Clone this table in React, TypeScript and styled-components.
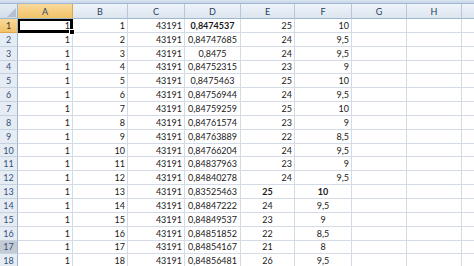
import React from "react";
import styled, { createGlobalStyle, css } from "styled-components";

type Align = "left" | "center" | "right";

const GlobalStyle = createGlobalStyle`
	html, body {
		margin: 0;
		padding: 0;
		background: #ffffff;
		overflow: hidden;
	}

	body {
		font-family: "Lato", "Liberation Sans", sans-serif;
	}
`;

const COLUMNS = ["A", "B", "C", "D", "E", "F", "G", "H", ""];

const D_VALUES = [
	"0,8474537",
	"0,84747685",
	"0,8475",
	"0,84752315",
	"0,8475463",
	"0,84756944",
	"0,84759259",
	"0,84761574",
	"0,84763889",
	"0,84766204",
	"0,84837963",
	"0,84840278",
	"0,83525463",
	"0,84847222",
	"0,84849537",
	"0,84851852",
	"0,84854167",
	"0,84856481",
];

const E_VALUES = [25, 24, 24, 23, 25, 24, 25, 23, 22, 24, 23, 24, 25, 24, 23, 22, 21, 26];
const F_VALUES = ["10", "9,5", "9,5", "9", "10", "9,5", "10", "9", "8,5", "9,5", "9", "9,5", "10", "9,5", "9", "8,5", "8", "9,5"];

const App = () => {
	const rows = D_VALUES.map((d, i) => ({
		n: i + 1,
		d,
		e: E_VALUES[i],
		f: F_VALUES[i],
		late: i >= 12,
	}));

	return (
		<Container>
			<GlobalStyle />
			<FormulaEdge />
			<Sheet>
				<Corner>
					<svg width="10" height="10" viewBox="0 0 10 10">
						<polygon points="10,1 10,10 1,10" fill="#b4c0d0" />
					</svg>
				</Corner>
				{COLUMNS.map((c, i) => (
					<ColHeader key={c + i} $active={c === "A"}>
						{c}
					</ColHeader>
				))}

				{rows.map((r) => (
					<React.Fragment key={r.n}>
						<RowHeader $active={r.n === 1} $hover={r.n === 17}>
							{r.n}
						</RowHeader>
						<Cell $align="right" $selected={r.n === 1}>
							1
						</Cell>
						<Cell $align="right">{r.n}</Cell>
						<Cell $align="right">43191</Cell>
						<Cell $align="center" $bold={r.n === 1}>
							{r.d}
						</Cell>
						<Cell $align={r.late ? "center" : "right"} $bold={r.n === 13}>
							{r.e}
						</Cell>
						<Cell $align={r.late ? "center" : "right"} $bold={r.n === 13}>
							{r.f}
						</Cell>
						<Cell />
						<Cell />
						<Cell />
					</React.Fragment>
				))}
			</Sheet>
		</Container>
	);
};

const Container = styled.div`
	width: 474px;
	height: 266px;
	overflow: hidden;
	background: #ffffff;
`;

const FormulaEdge = styled.div`
	height: 3px;
	background: linear-gradient(#dbe5f1, #c6d4e6);
	border-bottom: 1px solid #a3b8d3;
`;

const Sheet = styled.div`
	display: grid;
	grid-template-columns: 18px 55px 55px 57px 56px 54px 57px 55px 55px 40px;
	grid-template-rows: 15px;
	grid-auto-rows: 13.85px;
	font-size: 9px;
	color: #1a1a1a;
`;

const headerBase = css`
	display: flex;
	align-items: center;
	justify-content: center;
	box-sizing: border-box;
	border-right: 1px solid #9eb6ce;
	border-bottom: 1px solid #9eb6ce;
	color: #27415f;
	font-size: 9px;
`;

const Corner = styled.div`
	${headerBase};
	background: linear-gradient(#e4ebf4, #d3dde9);
	align-items: flex-end;
	justify-content: flex-end;
	padding: 0 1px 1px 0;
`;

const ColHeader = styled.div<{ $active?: boolean }>`
	${headerBase};
	background: ${({ $active }) =>
		$active
			? "linear-gradient(#f9d99c, #f2c266)"
			: "linear-gradient(#eef3f9, #dde5ef)"};
	border-right-color: ${({ $active }) => ($active ? "#e0a74d" : "#b6c8dc")};
`;

const RowHeader = styled.div<{ $active?: boolean; $hover?: boolean }>`
	${headerBase};
	background: ${({ $active, $hover }) =>
		$active
			? "linear-gradient(#f9d99c, #f2c266)"
			: $hover
			? "#c3cad4"
			: "#e6ecf4"};
	border-bottom-color: ${({ $active }) => ($active ? "#e0a74d" : "#c5d2e0")};
	color: ${({ $active }) => ($active ? "#3a3a2a" : "#33507a")};
`;

const Cell = styled.div<{ $align?: Align; $bold?: boolean; $selected?: boolean }>`
	position: relative;
	display: flex;
	align-items: center;
	justify-content: ${({ $align }) =>
		$align === "center" ? "center" : $align === "left" ? "flex-start" : "flex-end"};
	box-sizing: border-box;
	padding: 0 2px;
	border-right: 1px solid #d4dbe6;
	border-bottom: 1px solid #d4dbe6;
	font-weight: ${({ $bold }) => ($bold ? 700 : 400)};
	white-space: nowrap;

	${({ $selected }) =>
		$selected &&
		css`
			box-shadow: inset 0 0 0 2px #000000;
			border-color: #000000;

			&::after {
				content: "";
				position: absolute;
				right: -3px;
				bottom: -3px;
				width: 4px;
				height: 4px;
				background: #000000;
				border: 1px solid #ffffff;
				z-index: 1;
			}
		`}
`;

export default App;
